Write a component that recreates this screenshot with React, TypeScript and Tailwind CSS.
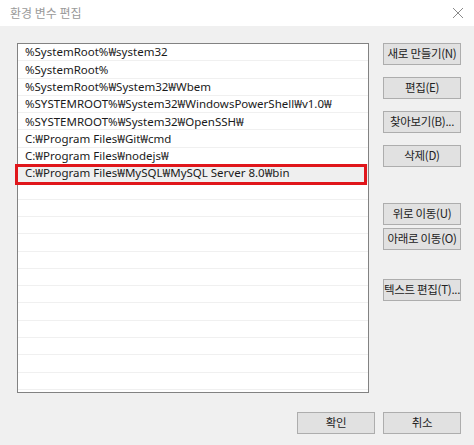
import React from "react";

const rows = [
  "%SystemRoot%₩system32",
  "%SystemRoot%",
  "%SystemRoot%₩System32₩Wbem",
  "%SYSTEMROOT%₩System32₩WindowsPowerShell₩v1.0₩",
  "%SYSTEMROOT%₩System32₩OpenSSH₩",
  "C:₩Program Files₩Git₩cmd",
  "C:₩Program Files₩nodejs₩",
  "C:₩Program Files₩MySQL₩MySQL Server 8.0₩bin",
];

const font = { fontFamily: '"Noto Sans CJK KR", "Noto Sans", sans-serif' };
const listFont = { fontFamily: '"Noto Sans", "Noto Sans CJK KR", sans-serif' };

function Btn({ label, className = "" }: { label: string; className?: string }) {
  return (
    <div
      className={
        "h-[22px] w-[78px] bg-[#e1e1e1] border border-[#adadad] flex items-center justify-center text-[11.5px] tracking-[-0.3px] text-[#222] whitespace-nowrap " +
        className
      }
    >
      {label}
    </div>
  );
}

export default function App() {
  const empty = Array.from({ length: 12 });
  return (
    <div className="w-[474px] h-[445px] bg-[#f0f0f0] flex flex-col overflow-hidden relative" style={font}>
      <div className="h-[26px] bg-white flex items-center justify-between pl-[10px] pr-[8px] shrink-0">
        <span className="text-[12px] text-[#9a9a9a]">환경 변수 편집</span>
        <svg width="12" height="12" viewBox="0 0 12 12" className="mr-[2px]">
          <path d="M1 1 L11 11 M11 1 L1 11" stroke="#8a8a8a" strokeWidth="1" />
        </svg>
      </div>
      <div className="flex pt-[17px] pl-[17px]">
        <div className="relative w-[352px] h-[350px] bg-white border border-[#828282] overflow-visible">
          <div className="flex flex-col h-full overflow-hidden" style={listFont}>
            {rows.map((r, i) => (
              <div
                key={i}
                className={
                  "h-[17.3px] shrink-0 border-b border-[#f0f0f0] flex items-center pl-[7px] text-[11.5px] text-[#1a1a1a] whitespace-nowrap leading-none " +
                  (i === 7 ? "bg-[#efefef]" : "")
                }
              >
                {r}
              </div>
            ))}
            {empty.map((_, i) => (
              <div key={"e" + i} className="h-[17.3px] shrink-0 border-b border-[#f0f0f0]" />
            ))}
          </div>
          <div className="absolute left-[-3px] top-[120px] w-[352px] h-[21px] border-[3px] border-[#e0161b]" />
        </div>
        <div className="flex flex-col ml-[14px]">
          <Btn label="새로 만들기(N)" />
          <Btn label="편집(E)" className="mt-[12px]" />
          <Btn label="찾아보기(B)..." className="mt-[12px]" />
          <Btn label="삭제(D)" className="mt-[12px]" />
          <Btn label="위로 이동(U)" className="mt-[36px]" />
          <Btn label="아래로 이동(O)" className="mt-[3px]" />
          <Btn label="텍스트 편집(T)..." className="mt-[29px]" />
        </div>
      </div>
      <div className="flex justify-end gap-[8px] pr-[13px] mt-[19px]">
        <Btn label="확인" />
        <Btn label="취소" />
      </div>
    </div>
  );
}
